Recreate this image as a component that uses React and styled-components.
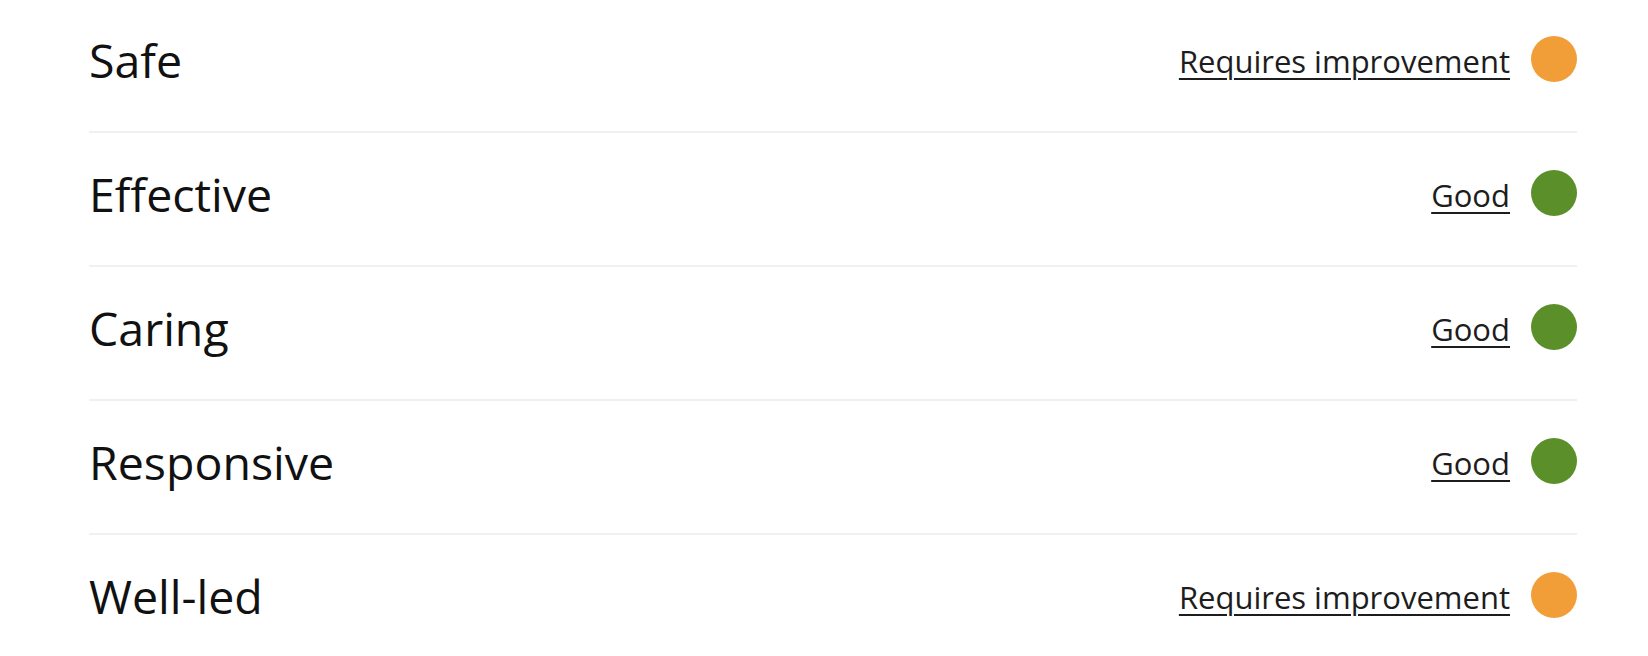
import React from 'react';
import styled, { createGlobalStyle } from 'styled-components';

const GlobalStyle = createGlobalStyle`
    body {
        margin: 0;
        background: #ffffff;
        font-family: "Open Sans", "Noto Sans", Arial, sans-serif;
        color: #111111;
    }
`;

const Page = styled.div`
    padding: 0 71px 0 89px;
`;

const List = styled.ul`
    margin: 0;
    padding: 0;
    list-style: none;
`;

const Row = styled.li`
    display: flex;
    align-items: center;
    justify-content: space-between;
    height: 46px;
    padding: 37px 0 49px;
    border-bottom: 2px solid #f0f0f0;

    &:first-child {
        padding-top: 36px;
    }
`;

const Title = styled.h3`
    margin: 0;
    padding-top: 2px;
    font-size: 46.5px;
    font-weight: 400;
    line-height: 46px;
    color: #111111;
`;

const Rating = styled.div`
    display: flex;
    align-items: center;
    gap: 21px;
`;

const RatingLink = styled.a`
    padding-top: 4px;
    font-size: 31px;
    line-height: 46px;
    color: #1d1d1d;
    text-decoration: underline;
    text-decoration-thickness: 2px;
    text-underline-offset: 5px;
    cursor: pointer;
`;

const Dot = styled.span`
    display: block;
    width: 46px;
    height: 46px;
    border-radius: 50%;
    background: ${p => p.$colour};
`;

const colours = {
    'Requires improvement': '#f29e38',
    'Good': '#5a8f29',
};

const ratings = [
    { key: 'Safe', rating: 'Requires improvement' },
    { key: 'Effective', rating: 'Good' },
    { key: 'Caring', rating: 'Good' },
    { key: 'Responsive', rating: 'Good' },
    { key: 'Well-led', rating: 'Requires improvement' },
];

export default function App() {
    return (
        <Page>
            <GlobalStyle />
            <List>
                {ratings.map(item => (
                    <Row key={item.key}>
                        <Title>{item.key}</Title>
                        <Rating>
                            <RatingLink href="#">{item.rating}</RatingLink>
                            <Dot $colour={colours[item.rating]} />
                        </Rating>
                    </Row>
                ))}
            </List>
        </Page>
    );
}
